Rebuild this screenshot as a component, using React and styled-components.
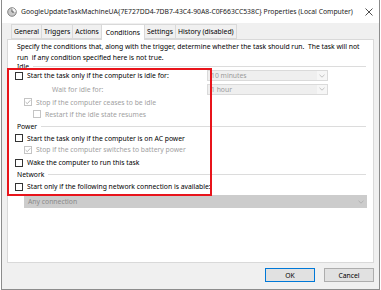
import React from 'react';
import styled, { createGlobalStyle } from 'styled-components';

const GlobalStyle = createGlobalStyle`
  html, body {
    margin: 0;
    padding: 0;
    background: #ffffff;
  }
  body {
    font-family: "Noto Sans", "Liberation Sans", sans-serif;
    font-size: 6.8px;
    color: #000;
  }
`;

const Window = styled.div`
  margin-left: 1px;
  width: 377px;
  height: 289px;
  border: 1px solid #8c8c8c;
  border-top: none;
  background: #f0f0f0;
  display: flex;
  flex-direction: column;
`;

const TitleBar = styled.div`
  height: 23px;
  background: #ffffff;
  display: flex;
  align-items: center;
  padding-left: 5px;
  padding-right: 6px;
`;

const TitleText = styled.div`
  margin-left: 4px;
  flex: 1;
  white-space: nowrap;
  color: #1a1a1a;
`;

const Body = styled.div`
  flex: 1;
  display: flex;
  flex-direction: column;
  padding: 0 5px 0 5px;
`;

const TabStrip = styled.div`
  height: 16px;
  display: flex;
  align-items: flex-end;
  padding-left: 4px;
`;

const Tab = styled.div`
  height: ${(p) => (p.active ? 15 : 13)}px;
  padding: 0 ${(p) => (p.active ? 4 : 2)}px;
  margin-bottom: ${(p) => (p.active ? -1 : 0)}px;
  margin-right: -1px;
  border: 1px solid #d9d9d9;
  border-bottom: ${(p) => (p.active ? 'none' : '1px solid #d9d9d9')};
  background: ${(p) => (p.active ? '#ffffff' : '#f0f0f0')};
  display: flex;
  align-items: center;
  white-space: nowrap;
  position: relative;
  z-index: ${(p) => (p.active ? 2 : 1)};
`;

const Panel = styled.div`
  height: 224px;
  background: #ffffff;
  border: 1px solid #d9d9d9;
  position: relative;
  display: flex;
  flex-direction: column;
  padding: 1px 7px 0 9px;
  box-sizing: border-box;
`;

const Description = styled.div`
  line-height: 11px;
  white-space: nowrap;
`;

const GroupHeader = styled.div`
  height: ${(p) => p.h}px;
  display: flex;
  align-items: center;
  white-space: nowrap;
  &::after {
    content: '';
    flex: 1;
    height: 1px;
    background: #dcdcdc;
    margin-left: 4px;
  }
`;

const Row = styled.div`
  height: ${(p) => p.h}px;
  display: flex;
  align-items: center;
  margin-left: -2px;
  padding-left: ${(p) => p.indent || 0}px;
  white-space: nowrap;
  color: ${(p) => (p.disabled ? '#a0a0a0' : '#000')};
`;

const Label = styled.span`
  flex: 1;
`;

const Box = styled.span`
  width: 8px;
  height: 8px;
  box-sizing: border-box;
  border: 1px solid ${(p) => (p.disabled ? '#c4c4c4' : '#333333')};
  background: #fff;
  margin-right: 4px;
  display: inline-flex;
  align-items: center;
  justify-content: center;
  flex: none;
`;

const Select = styled.div`
  width: ${(p) => p.w}px;
  height: ${(p) => p.h}px;
  box-sizing: border-box;
  border: 1px solid ${(p) => (p.dark ? '#cccccc' : '#dadada')};
  background: ${(p) => (p.dark ? '#cccccc' : '#efefef')};
  color: ${(p) => (p.dark ? '#8a8a8a' : '#9a9a9a')};
  margin-right: ${(p) => p.mr || 0}px;
  margin-left: ${(p) => p.ml || 0}px;
  margin-top: ${(p) => p.mt || 0}px;
  display: flex;
  align-items: center;
  padding-left: 3px;
`;

const SelectText = styled.span`
  flex: 1;
`;

const Chevron = styled.span`
  width: 10px;
  height: 100%;
  display: flex;
  align-items: center;
  justify-content: center;
  background: ${(p) => (p.dark ? 'transparent' : '#f6f6f6')};
`;

const Highlight = styled.div`
  position: absolute;
  left: -1px;
  top: 28px;
  width: 205px;
  height: 128px;
  border: 2px solid #e8141b;
  box-sizing: border-box;
  pointer-events: none;
`;

const Footer = styled.div`
  flex: 1;
  display: flex;
  justify-content: flex-end;
  align-items: flex-start;
  padding-top: 5px;
  gap: 9px;
`;

const Button = styled.div`
  width: 50px;
  height: 14px;
  box-sizing: border-box;
  border: 1px solid ${(p) => (p.primary ? '#0078d7' : '#adadad')};
  background: #e1e1e1;
  display: flex;
  align-items: center;
  justify-content: center;
`;

const Check = ({ checked, disabled }) => (
  <Box disabled={disabled}>
    {checked && (
      <svg width="6" height="6" viewBox="0 0 6 6">
        <path d="M0.6 3.1 L2.3 4.7 L5.4 1.2" fill="none" stroke="#b0b0b0" strokeWidth="0.9" />
      </svg>
    )}
  </Box>
);

const Arrow = ({ color }) => (
  <svg width="6" height="4" viewBox="0 0 6 4">
    <path d="M0.5 0.8 L3 3.2 L5.5 0.8" fill="none" stroke={color} strokeWidth="0.8" />
  </svg>
);

const TaskIcon = () => (
  <svg width="10" height="10" viewBox="0 0 10 10">
    <circle cx="5" cy="5" r="4.3" fill="#c9c9c9" stroke="#6a6a6a" strokeWidth="0.8" />
    <path d="M5 5 L5 1.2 A3.8 3.8 0 0 1 8.8 5 Z" fill="#f4f4f4" />
    <path d="M5 2.4 L5 5 L7 5" fill="none" stroke="#404040" strokeWidth="0.8" />
  </svg>
);

const CloseIcon = () => (
  <svg width="8" height="8" viewBox="0 0 8 8">
    <path d="M0.5 0.5 L7.5 7.5 M7.5 0.5 L0.5 7.5" stroke="#222" strokeWidth="0.8" />
  </svg>
);

const tabs = ['General', 'Triggers', 'Actions', 'Conditions', 'Settings', 'History (disabled)'];

export default function App() {
  return (
    <>
      <GlobalStyle />
      <Window>
        <TitleBar>
          <TaskIcon />
          <TitleText>
            GoogleUpdateTaskMachineUA{'{'}7E727DD4-7DB7-43C4-90A8-C0F663CC538C{'}'} Properties (Local Computer)
          </TitleText>
          <CloseIcon />
        </TitleBar>
        <Body>
          <TabStrip>
            {tabs.map((t) => (
              <Tab key={t} active={t === 'Conditions'}>{t}</Tab>
            ))}
          </TabStrip>
          <Panel>
            <Description>
              Specify the conditions that, along with the trigger, determine whether the task should run.&nbsp; The task will not
              <br />
              run&nbsp; if any condition specified here is not true.
            </Description>
            <GroupHeader h={6}>Idle</GroupHeader>
            <Row h={13}>
              <Check />
              <Label>Start the task only if the computer is idle for:</Label>
              <Select w={121} h={11} mr={38}>
                <SelectText>10 minutes</SelectText>
                <Chevron><Arrow color="#b4b4b4" /></Chevron>
              </Select>
            </Row>
            <Row h={14} indent={37} disabled>
              <Label>Wait for idle for:</Label>
              <Select w={121} h={11} mr={38}>
                <SelectText>1 hour</SelectText>
                <Chevron><Arrow color="#b4b4b4" /></Chevron>
              </Select>
            </Row>
            <Row h={12} indent={9} disabled>
              <Check checked disabled />
              <Label>Stop if the computer ceases to be idle</Label>
            </Row>
            <Row h={12} indent={18} disabled>
              <Check disabled />
              <Label>Restart if the idle state resumes</Label>
            </Row>
            <GroupHeader h={13}>Power</GroupHeader>
            <Row h={10}>
              <Check />
              <Label>Start the task only if the computer is on AC power</Label>
            </Row>
            <Row h={13} indent={9} disabled>
              <Check checked disabled />
              <Label>Stop if the computer switches to battery power</Label>
            </Row>
            <Row h={13}>
              <Check />
              <Label>Wake the computer to run this task</Label>
            </Row>
            <GroupHeader h={11}>Network</GroupHeader>
            <Row h={13}>
              <Check />
              <Label>Start only if the following network connection is available:</Label>
            </Row>
            <Select w={343} h={13} ml={7} mt={2} dark>
              <SelectText>Any connection</SelectText>
              <Chevron dark><Arrow color="#a8a8a8" /></Chevron>
            </Select>
            <Highlight />
          </Panel>
          <Footer>
            <Button primary>OK</Button>
            <Button>Cancel</Button>
          </Footer>
        </Body>
      </Window>
    </>
  );
}
